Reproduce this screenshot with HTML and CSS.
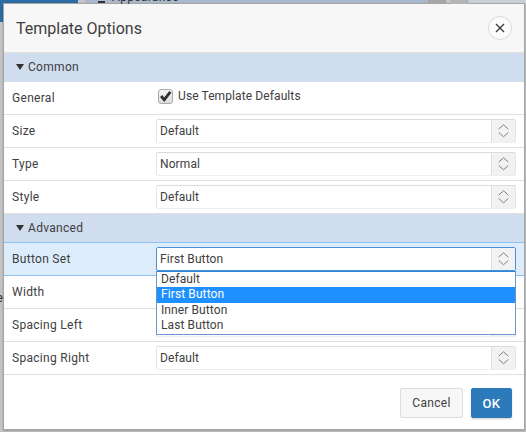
FILE: index.html
```html
<!DOCTYPE html>
<html lang="en">
<head>
<meta charset="utf-8">
<title>Template Options</title>
<link rel="stylesheet" href="styles.css">
</head>
<body>
<svg width="0" height="0" class="defs">
  <symbol id="updown" viewBox="0 0 24 24">
    <path d="M7 10 12 5.500 17 10M7 13.500 12 18l5-4.500" fill="none" stroke="#7a7a7a" stroke-width="1"/>
  </symbol>
</svg>
<div class="backdrop">
  <div class="bd-blue"></div>
  <div class="bd-gray"></div>
  <div class="bd-app"><span class="bd-mark"></span>Appearance</div>
  <div class="bd-slate"></div>
  <div class="bd-block1"></div>
  <div class="bd-block2"></div>
  <div class="bd-light"></div>
  <div class="bd-left"></div>
  <div class="bd-e">e</div>
</div>
<main class="dialog">
  <header class="head">
    <h1 class="title">Template Options</h1>
    <button class="close" aria-label="Close">
      <svg width="12" height="12" viewBox="0 0 12 12"><path d="M2 2l8 8M10 2l-8 8" stroke="#3a3a3a" stroke-width="1.300" fill="none"/></svg>
    </button>
  </header>
  <section>
    <h2 class="group"><span class="tri"></span>Common</h2>
    <div class="row">
      <div class="label">General</div>
      <label class="check">
        <span class="box"><svg width="13" height="13" viewBox="0 0 13 13"><path d="M1 7 3.300 5 5.200 7.500 10.300 1 12.500 2.800 5.300 12Z" fill="#2e2e2e"/></svg></span>
        Use Template Defaults
      </label>
    </div>
    <div class="row"><div class="label">Size</div><div class="select"><span class="val">Default</span><span class="arrow"><svg width="24" height="24"><use href="#updown"/></svg></span></div></div>
    <div class="row"><div class="label">Type</div><div class="select"><span class="val">Normal</span><span class="arrow"><svg width="24" height="24"><use href="#updown"/></svg></span></div></div>
    <div class="row"><div class="label">Style</div><div class="select"><span class="val">Default</span><span class="arrow"><svg width="24" height="24"><use href="#updown"/></svg></span></div></div>
  </section>
  <section>
    <h2 class="group"><span class="tri"></span>Advanced</h2>
    <div class="row active">
      <div class="label">Button Set</div>
      <div class="select focus">
        <span class="val">First Button</span><span class="arrow"><svg width="24" height="24"><use href="#updown"/></svg></span>
        <ul class="list">
          <li>Default</li>
          <li class="sel">First Button</li>
          <li>Inner Button</li>
          <li>Last Button</li>
        </ul>
      </div>
    </div>
    <div class="row"><div class="label">Width</div><div class="select"><span class="val">Default</span><span class="arrow"><svg width="24" height="24"><use href="#updown"/></svg></span></div></div>
    <div class="row"><div class="label">Spacing Left</div><div class="select"><span class="val">Default</span><span class="arrow"><svg width="24" height="24"><use href="#updown"/></svg></span></div></div>
    <div class="row"><div class="label">Spacing Right</div><div class="select"><span class="val">Default</span><span class="arrow"><svg width="24" height="24"><use href="#updown"/></svg></span></div></div>
  </section>
  <footer class="foot">
    <button class="btn">Cancel</button>
    <button class="btn ok">OK</button>
  </footer>
</main>
</body>
</html>
```
FILE: styles.css
```css
* { box-sizing: border-box; }
html, body { margin: 0; padding: 0; }
body {
  width: 526px;
  height: 432px;
  overflow: hidden;
  position: relative;
  background: #c3c4c5;
  font-family: Roboto, "Liberation Sans", sans-serif;
  font-size: 12px;
  color: #404040;
  padding: 3px 1px 0 3px;
}
.defs { position: absolute; }
.backdrop { position: absolute; inset: 0; overflow: hidden; }
.backdrop > div { position: absolute; }
.bd-blue { left: 0; top: 0; width: 78px; height: 22px; background: #2b6da4; }
.bd-gray { left: 78px; top: 0; width: 7px; height: 4px; background: #c4c4c4; }
.bd-slate { left: 85px; top: 0; width: 354px; height: 4px; background: #a9b8cc; }
.bd-block1 { left: 428px; top: 0; width: 18px; height: 4px; background: #a6a6a6; z-index: 1; }
.bd-block2 { left: 451px; top: 0; width: 17px; height: 4px; background: #b4b4b4; z-index: 1; }
.bd-light { left: 469px; top: 0; width: 57px; height: 4px; background: #c9d0d6; }
.bd-left { left: 0; top: 22px; width: 3px; height: 410px; background: #c4c4c4; }
.bd-app { left: 98px; top: -10px; font-size: 12px; letter-spacing: .3px; line-height: 15px; color: #333; z-index: 1; white-space: nowrap; display: flex; align-items: flex-end; gap: 7px; }
.bd-mark { width: 7px; height: 2px; background: #333; margin-bottom: 2px; }
.bd-e { left: -4px; top: 290px; font-size: 13px; line-height: 16px; color: #333; }

.dialog {
  position: relative;
  width: 522px;
  height: 427px;
  background: #fff;
  border: 1px solid #a6a6a6;
  box-shadow: 0 1px 2px rgba(0,0,0,.2);
  display: flex;
  flex-direction: column;
}
.head {
  height: 49px;
  background: #f7f7f7;
  border-bottom: 1px solid #e0e0e0;
  display: flex;
  align-items: center;
  justify-content: space-between;
  padding: 0 12px;
}
.title { margin: 0; font-size: 16px; font-weight: 400; color: #404040; }
.close {
  width: 24px; height: 24px; padding: 0;
  border-radius: 50%;
  border: 1px solid #dcdcdc;
  background: #fbfbfb;
  display: flex; align-items: center; justify-content: center;
}
.group {
  margin: 0;
  height: 29px;
  background: #cfddef;
  display: flex;
  align-items: center;
  font-size: 12px;
  font-weight: 400;
  color: #404040;
  padding: 0 0 2px 12px;
  letter-spacing: .3px;
}
.tri {
  width: 0; height: 0;
  border-left: 4px solid transparent;
  border-right: 4px solid transparent;
  border-top: 6px solid #333;
  margin-right: 4px;
}
.row {
  height: 33px;
  border-bottom: 1px solid #e0e0e0;
  display: flex;
  align-items: center;
  padding: 0 8px;
}
.label { width: 144px; letter-spacing: .3px; }
.select {
  position: relative;
  width: 360px;
  height: 24px;
  border: 1px solid;
  border-color: #dcdcdc #e6e6e6 #eeeeee;
  border-radius: 2px;
  background: #fff;
  display: flex;
  align-items: center;
  justify-content: space-between;
  letter-spacing: .1px;
}
.val { padding-left: 3px; }
.arrow {
  width: 24px; height: 22px;
  background: #f2f2f2;
  border-left: 1px solid #dedede;
  display: flex; align-items: center; justify-content: center;
}
.active {
  background: #dcecfb;
  border-top: 1px solid #8cc1f2;
  border-bottom: 1px solid #8cc1f2;
  margin-top: -1px;
  height: 34px;
}
.focus { border-color: #4a90d9; }
.list {
  position: absolute;
  left: -1px; top: 23px;
  width: 360px;
  height: 64px;
  margin: 0; padding: 0;
  list-style: none;
  background: #fff;
  border: 1px solid #6a96d4;
  border-top-color: #2f86de;
  z-index: 3;
}
.list li { height: 15px; line-height: 15px; padding-left: 4px; }
.list .sel { background: #1e90ff; color: #fff; height: 16px; }
.check { display: flex; align-items: center; gap: 5px; margin: -4px 0 0 2px; letter-spacing: .1px; }
.box {
  width: 15px; height: 15px;
  border: 1px solid #a9a9a9;
  border-radius: 3px;
  background: linear-gradient(#f4f4f4, #dedede);
  display: flex; align-items: center; justify-content: center;
}
.foot {
  flex: 1;
  display: flex;
  justify-content: flex-end;
  align-items: flex-start;
  gap: 8px;
  padding: 13px 12px 0 0;
}
.btn {
  height: 30px;
  width: 63px;
  padding: 0;
  font: 12px Roboto, "Liberation Sans", sans-serif;
  letter-spacing: .3px;
  color: #404040;
  background: #f7f7f7;
  border: 1px solid #dcdcdc;
  border-radius: 2px;
}
.ok {
  width: 41px;
  background: #2c7ab9;
  border-color: #2c7ab9;
  color: #fff;
  font-size: 13px;
  font-weight: 500;
  box-shadow: 0 1px 2px rgba(0,0,0,.2);
}
```
